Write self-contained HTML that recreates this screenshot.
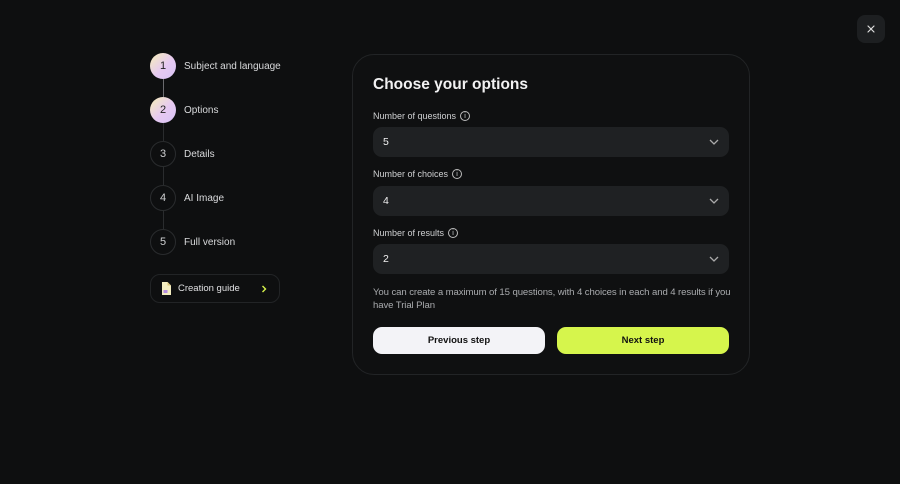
<!DOCTYPE html>
<html><head><style>
*{box-sizing:border-box;margin:0;padding:0}
body{width:900px;height:484px;background:#0e0f10;font-family:"Liberation Sans",sans-serif;color:#e8e8ea;position:relative;overflow:hidden}
.abs{position:absolute}
.circ{position:absolute;left:150px;width:26px;height:26px;border-radius:50%;border:1px solid #2a2c2e;color:#cfd0d2;font-size:11px;display:flex;align-items:center;justify-content:center}
.act{background:linear-gradient(135deg,#f6efb8,#e6c9f2 55%,#d8c4f5);color:#222;border:none}
.lbl{position:absolute;left:184px;font-size:10px;color:#d9dadc}
.line{position:absolute;left:162.5px;width:1px;background:#2a2c2e}
.card{left:352px;top:54px;width:398px;height:321px;border:1px solid #222426;border-radius:22px;background:#0f1011}
.fl{position:absolute;left:373px;font-size:9px;color:#cfd0d2;display:flex;align-items:center;gap:4px}
.i{width:10px;height:10px;border:1px solid #bbb;border-radius:50%;font-size:7px;display:flex;align-items:center;justify-content:center}
.sel{position:absolute;left:373px;width:356px;height:30px;border-radius:9px;background:#1f2123;font-size:10.5px;color:#f0f0f0;padding-left:10px;display:flex;align-items:center}
.sel svg{position:absolute;right:10px;top:12px}
.btn{position:absolute;top:327px;width:172px;height:27px;border-radius:9px;font-size:9.5px;font-weight:bold;color:#111;display:flex;align-items:center;justify-content:center}
</style></head><body>
<div class="abs" style="left:857px;top:15px;width:28px;height:28px;border-radius:8px;background:#1d1f21;display:flex;align-items:center;justify-content:center">
<svg width="8" height="8" viewBox="0 0 8 8"><path d="M1 1L7 7M7 1L1 7" stroke="#ddd" stroke-width="1.2" stroke-linecap="round"/></svg></div>

<div class="line" style="top:79px;height:18px;background:#6a6a6e"></div>
<div class="line" style="top:123px;height:18px"></div>
<div class="line" style="top:167px;height:18px"></div>
<div class="line" style="top:211px;height:18px"></div>
<div class="circ act" style="top:53px">1</div><div class="lbl" style="top:61px">Subject and language</div>
<div class="circ act" style="top:97px">2</div><div class="lbl" style="top:105px">Options</div>
<div class="circ" style="top:141px">3</div><div class="lbl" style="top:149px">Details</div>
<div class="circ" style="top:185px">4</div><div class="lbl" style="top:193px">AI Image</div>
<div class="circ" style="top:229px">5</div><div class="lbl" style="top:237px">Full version</div>

<div class="abs" style="left:150px;top:274px;width:130px;height:29px;border:1px solid #222426;border-radius:10px;display:flex;align-items:center;padding-left:10px;font-size:9.5px;color:#e0e0e2">
<svg width="10" height="13" viewBox="0 0 10 13" style="margin-right:7px"><path d="M1 0H6.5L10 3.5V13H1Z" fill="#f3ecc0"/><path d="M6.5 0V3.5H10" fill="#d9c47a"/><rect x="2.5" y="8" width="4" height="3" fill="#b58ee0"/></svg>
Creation guide
<svg width="6" height="8" viewBox="0 0 6 8" style="position:absolute;right:12px"><path d="M1.5 1L4.5 4L1.5 7" stroke="#d6f24a" stroke-width="1.4" fill="none"/></svg></div>

<div class="abs card"></div>
<div class="abs" style="left:373px;top:76px;font-size:15.5px;font-weight:bold;color:#f2f2f3">Choose your options</div>
<div class="fl" style="top:111px">Number of questions <span class="i">i</span></div>
<div class="sel" style="top:127px">5<svg width="10" height="6" viewBox="0 0 10 6"><path d="M1 1L5 5L9 1" stroke="#aaa" stroke-width="1.3" fill="none"/></svg></div>
<div class="fl" style="top:169px">Number of choices <span class="i">i</span></div>
<div class="sel" style="top:186px">4<svg width="10" height="6" viewBox="0 0 10 6"><path d="M1 1L5 5L9 1" stroke="#aaa" stroke-width="1.3" fill="none"/></svg></div>
<div class="fl" style="top:228px">Number of results <span class="i">i</span></div>
<div class="sel" style="top:244px">2<svg width="10" height="6" viewBox="0 0 10 6"><path d="M1 1L5 5L9 1" stroke="#aaa" stroke-width="1.3" fill="none"/></svg></div>
<div class="abs" style="left:373px;top:286px;width:362px;font-size:9.6px;line-height:13px;color:#a9abae;letter-spacing:-0.1px">You can create a maximum of 15 questions, with 4 choices in each and 4 results if you have Trial Plan</div>
<div class="btn" style="left:373px;background:#f3f3f7">Previous step</div>
<div class="btn" style="left:557px;background:#d6f54c">Next step</div>
</body></html>
